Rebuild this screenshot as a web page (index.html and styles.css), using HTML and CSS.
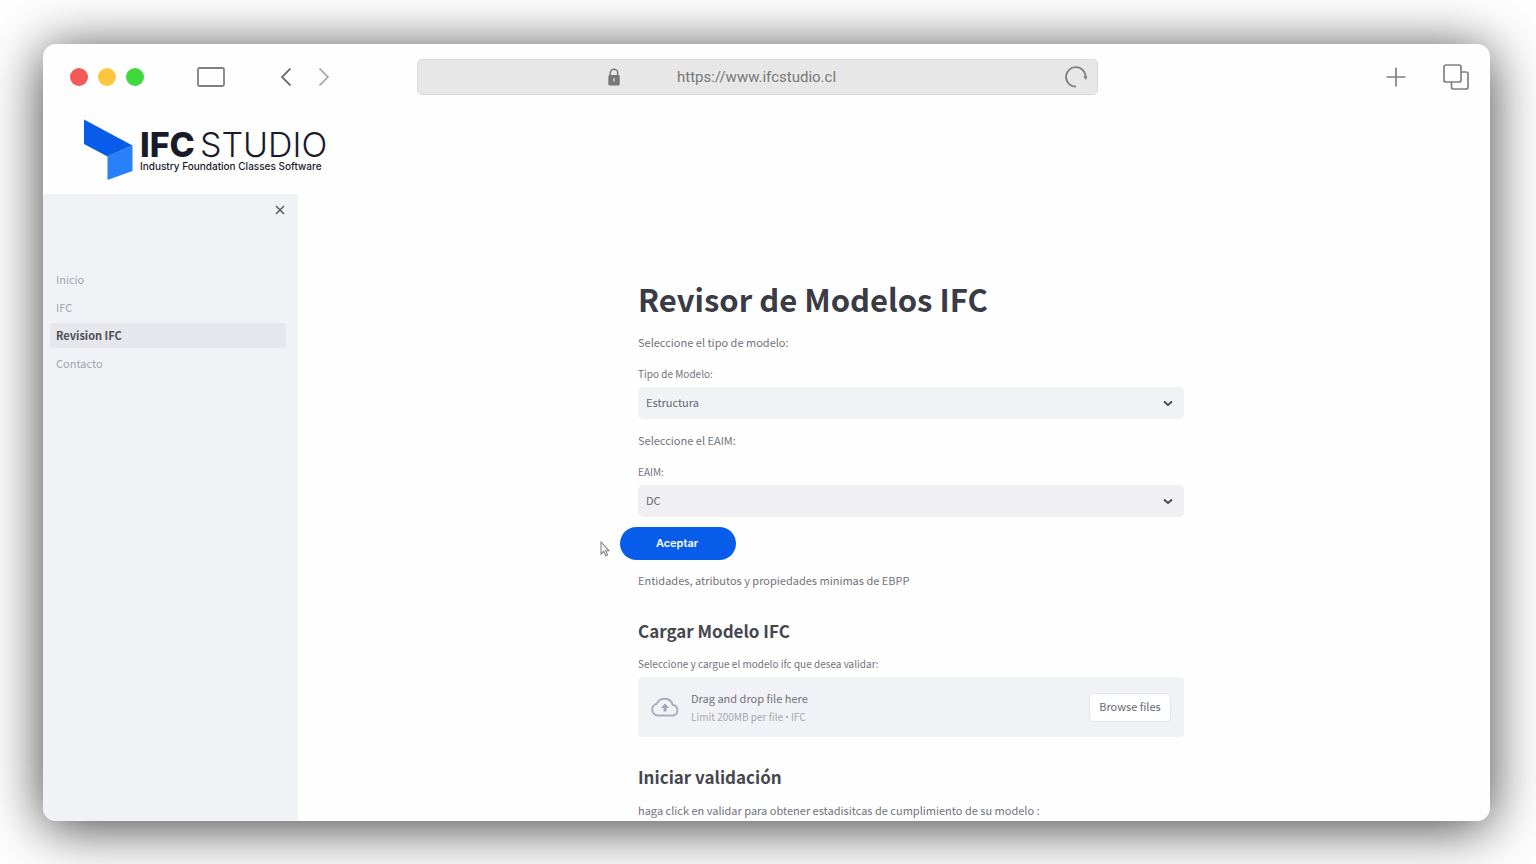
FILE: index.html
```html
<!DOCTYPE html>
<html lang="es">
<head>
<meta charset="utf-8">
<title>IFC Studio</title>
<link rel="stylesheet" href="styles.css">
</head>
<body>
<div class="window">
  <header class="toolbar">
    <div class="lights"><span class="light red"></span><span class="light yellow"></span><span class="light green"></span></div>
    <button class="icon-btn panel-btn" aria-label="Panel"><svg width="28" height="20" viewBox="0 0 28 20"><rect x="1" y="1" width="26" height="18" rx="1.5" fill="none" stroke="#808080" stroke-width="1.8"/></svg></button>
    <nav class="history">
      <button class="icon-btn" aria-label="Atrás"><svg width="12" height="20" viewBox="0 0 12 20"><path d="M10.500 1.500 2 10l8.500 8.500" fill="none" stroke="#707070" stroke-width="1.8"/></svg></button>
      <button class="icon-btn" aria-label="Adelante"><svg width="12" height="20" viewBox="0 0 12 20"><path d="M1.500 1.500 10 10l-8.500 8.500" fill="none" stroke="#b0b0b0" stroke-width="1.8"/></svg></button>
    </nav>
    <div class="address">
      <svg class="lock" width="12" height="18" viewBox="0 0 12 18"><path d="M2.300 8V5a3.700 3.700 0 0 1 7.400 0v3" fill="none" stroke="#777" stroke-width="1.500"/><rect x=".3" y="7" width="11.400" height="10.500" rx="1.500" fill="#777"/><path d="M6 10.500v3" stroke="#ddd" stroke-width="1.500"/></svg>
      <input class="url" type="text" aria-label="Dirección" value="https://www.ifcstudio.cl">
      <button class="icon-btn" aria-label="Recargar"><svg width="24" height="22" viewBox="0 0 24 22"><path d="M12 20.700A9.800 9.800 0 1 1 21.600 11.500" fill="none" stroke="#808080" stroke-width="1.800"/><path d="M19.400 10.500h4.200l-1.900 3.500z" fill="#808080"/></svg></button>
    </div>
    <div class="actions">
      <button class="icon-btn" aria-label="Nueva pestaña"><svg width="20" height="20" viewBox="0 0 20 20"><path d="M10 .5v19M.5 10h19" stroke="#808080" stroke-width="1.700"/></svg></button>
      <button class="icon-btn" aria-label="Pestañas"><svg width="26" height="26" viewBox="0 0 26 26" fill="none" stroke="#808080" stroke-width="1.700"><rect x="1" y="1" width="17" height="17" rx="2"/><path d="M18 8h5a2 2 0 0 1 2 2v13a2 2 0 0 1-2 2H10.500a2 2 0 0 1-2-2v-5"/></svg></button>
    </div>
  </header>
  <div class="brand">
    <svg width="49" height="61" viewBox="0 0 49 61"><path d="M0 .5 48.500 26.500 23.500 37.500 0 25z" fill="#075de9"/><path d="M48.500 26.500V52L23.500 61V37.500z" fill="#2880fb"/></svg>
    <div class="brand-text">
      <div class="brand-name"><b>IFC</b><span>STUDIO</span></div>
      <div class="brand-sub">Industry Foundation Classes Software</div>
    </div>
  </div>
  <div class="page">
    <aside class="sidebar">
      <button class="icon-btn close" aria-label="Cerrar"><svg width="10" height="10" viewBox="0 0 10 10"><path d="m1 1 8 8M9 1 1 9" stroke="#5c5e65" stroke-width="1.600"/></svg></button>
      <nav class="menu">
        <a href="#">Inicio</a>
        <a href="#">IFC</a>
        <a href="#" class="active" aria-current="page">Revision IFC</a>
        <a href="#">Contacto</a>
      </nav>
    </aside>
    <main class="main">
      <div class="column">
        <h1>Revisor de Modelos IFC</h1>
        <p class="lead">Seleccione el tipo de modelo:</p>
        <label for="tipo">Tipo de Modelo:</label>
        <div class="select">
          <select id="tipo"><option>Estructura</option></select>
          <svg width="10" height="7" viewBox="0 0 10 7"><path d="m1 1.500 4 3.500 4-3.500" fill="none" stroke="#44464d" stroke-width="1.800"/></svg>
        </div>
        <p class="lead">Seleccione el EAIM:</p>
        <label for="eaim">EAIM:</label>
        <div class="select focus">
          <select id="eaim"><option>DC</option></select>
          <svg width="10" height="7" viewBox="0 0 10 7"><path d="m1 1.500 4 3.500 4-3.500" fill="none" stroke="#44464d" stroke-width="1.800"/></svg>
        </div>
        <div class="submit">
          <button class="accept">Aceptar</button>
          <svg class="cursor" width="10" height="16" viewBox="0 0 10 16"><path d="M1 1v12l2.800-2.500 2 4.300 1.800-.8-1.900-4.200H9z" fill="#f4f4f4" stroke="#888" stroke-width="1.100"/></svg>
        </div>
        <p class="result">Entidades, atributos y propiedades minimas de EBPP</p>
        <h2>Cargar Modelo IFC</h2>
        <p class="hint">Seleccione y cargue el modelo ifc que desea validar:</p>
        <div class="upload">
          <svg width="30" height="22" viewBox="0 0 30 22"><path d="M7.500 19.500A6 6 0 0 1 6.800 7.700 8.500 8.500 0 0 1 22.700 8.800 5.500 5.500 0 0 1 23.500 19.500z" fill="none" stroke="#a9adc0" stroke-width="2"/><path d="M15 7.500 19.200 12h-2.700v3.500h-3V12h-2.700z" fill="#a3a6b6"/></svg>
          <div class="upload-text">
            <div class="upload-title">Drag and drop file here</div>
            <div class="upload-limit">Limit 200MB per file <span class="dot">•</span> IFC</div>
          </div>
          <button class="browse">Browse files</button>
        </div>
        <h2 class="next">Iniciar validación</h2>
        <p class="last">haga click en validar para obtener estadisitcas de cumplimiento de su modelo :</p>
      </div>
    </main>
  </div>
</div>
</body>
</html>
```
FILE: styles.css
```css
* { box-sizing: border-box; }
body {
  margin: 0;
  min-height: 100vh;
  display: flex;
  padding: 44px 46px 43px 43px;
  background: #fff;
  font-family: "Noto Sans CJK SC", "Noto Sans", sans-serif;
  color: #71737a;
}
h1, h2, p { margin: 0; }
button { font: inherit; cursor: pointer; }
svg { display: block; flex: none; }
.window {
  flex: 1;
  display: flex;
  flex-direction: column;
  overflow: hidden;
  border-radius: 13px;
  background: #fefefe;
  box-shadow: 0 6px 56px rgba(0, 0, 0, 0.76);
}
.icon-btn { padding: 0; border: 0; background: none; }
.toolbar { display: flex; align-items: center; height: 66px; padding: 0 21px 0 27px; }
.lights { display: flex; gap: 10px; }
.light { width: 18px; height: 18px; border-radius: 50%; }
.red { background: #f25a5a; }
.yellow { background: #fdc73d; }
.green { background: #3fd93b; }
.panel-btn { margin-left: 53px; }
.history { display: flex; gap: 26px; margin: 0 87px 0 55px; }
.address {
  flex: 1;
  display: flex;
  align-items: center;
  height: 36px;
  padding: 0 9px 0 190px;
  border: 1px solid #d8d8d8;
  border-radius: 5px;
  background: #e7e7e7;
}
.url {
  flex: 1;
  min-width: 0;
  margin-left: 57px;
  padding: 0;
  border: 0;
  outline: 0;
  background: none;
  color: #777;
  font: 15px Roboto, sans-serif;
}
.actions { display: flex; align-items: center; gap: 37px; margin-left: 288px; }
.brand { display: flex; gap: 7px; height: 84px; padding: 9px 41px; }
.brand-text { padding-top: 10px; color: #1a1b2a; }
.brand-name { display: flex; align-items: center; gap: 5px; height: 32px; line-height: 32px; }
.brand-name b { font-family: Inter, sans-serif; font-size: 34px; font-weight: 800; }
.brand-name span { font-family: Inter, sans-serif; font-size: 34px; font-weight: 300; }
.brand-sub { font: 500 10px/10px Inter, sans-serif; }
.page { flex: 1; display: flex; }
.sidebar { width: 255px; padding: 11px 12px 0 7px; background: #f0f2f6; }
.close { display: block; margin: 0 1px 0 auto; }
.menu { display: flex; flex-direction: column; gap: 3px; margin-top: 52px; }
.menu a {
  padding: 0 6px;
  border-radius: 3px;
  color: #a3a5ab;
  font-size: 11px;
  line-height: 25px;
  text-decoration: none;
}
.menu .active { background: #e5e7ec; color: #4e5057; font-weight: 700; }
.main { flex: 1; display: grid; grid-template-columns: 10fr 546px 9fr; }
.column { grid-column: 2; padding-top: 85px; }
h1 { color: #3a3b44; font-size: 31px; line-height: 40px; }
h2 { color: #45464e; font-size: 17px; line-height: 28px; }
.lead { margin-top: 11px; font-size: 11px; line-height: 20px; }
h1 + .lead { margin-top: 13px; }
label { display: block; margin: 14px 0 5px; font-size: 10px; line-height: 16px; }
.select { display: grid; align-items: center; height: 32px; border-radius: 5px; background: #f0f2f6; }
.focus { background: #f0f0f2; }
.select select {
  grid-area: 1 / 1;
  height: 32px;
  padding: 0 8px 2px;
  border: 0;
  outline: 0;
  appearance: none;
  background: none;
  color: #66686f;
  font: inherit;
  font-size: 11px;
}
.select svg { grid-area: 1 / 1; justify-self: end; margin-right: 11px; pointer-events: none; }
.submit { position: relative; margin: 10px 0 10px -18px; }
.accept {
  display: block;
  width: 116px;
  height: 33px;
  padding: 0 2px 1px 0;
  border: 0;
  border-radius: 17px;
  background: #075de9;
  color: #fff;
  font: 600 11px Inter, sans-serif;
}
.cursor { position: absolute; left: -20px; top: 14px; }
.result { margin-bottom: 27px; font-size: 11px; line-height: 20px; }
.hint { margin: 11px 0 5px; font-size: 10px; line-height: 16px; }
.upload { display: flex; align-items: center; height: 60px; padding: 0 13px 0 12px; border-radius: 4px; background: #f0f2f6; }
.upload-text { flex: 1; margin-left: 11px; }
.upload-title { font-size: 11px; line-height: 20px; }
.upload-limit { color: #a6a8b0; font-size: 10px; line-height: 18px; }
.dot { font-family: Roboto, sans-serif; }
.browse {
  width: 82px;
  height: 29px;
  padding: 0 0 2px;
  border: 1px solid #e5e6ea;
  border-radius: 5px;
  background: #fff;
  color: #66686f;
  font-size: 11px;
}
.next { margin-top: 26px; }
.last { height: 20px; margin-top: 9px; font-size: 11px; line-height: 20px; }
```
